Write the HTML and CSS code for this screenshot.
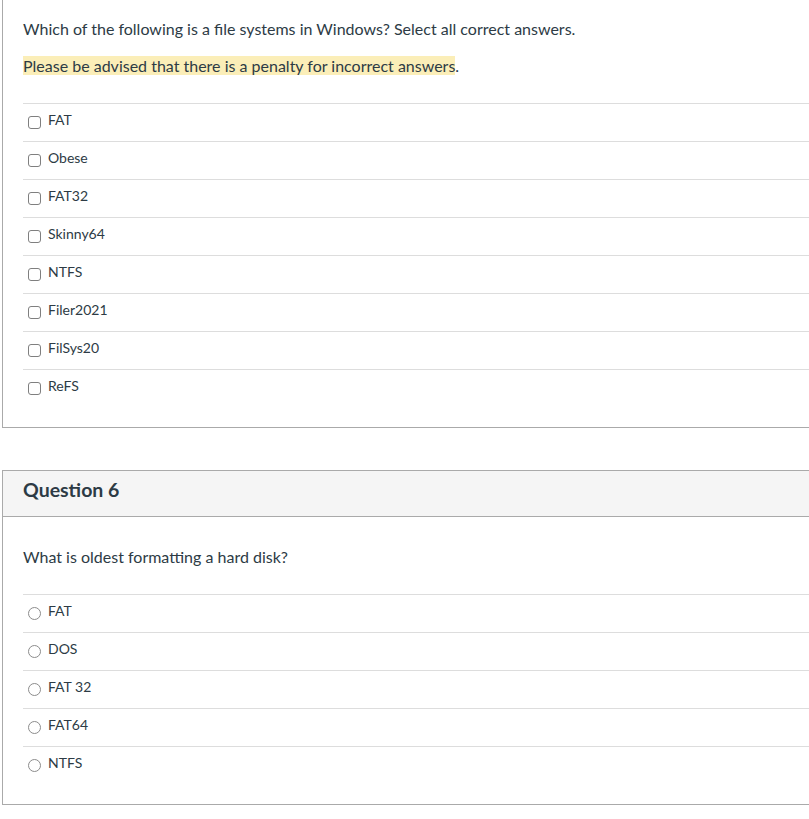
FILE: index.html
```html
<!DOCTYPE html>
<html lang="en">
<head>
<meta charset="utf-8">
<title>Quiz</title>
<link rel="stylesheet" href="styles.css">
</head>
<body>
<div class="page">
  <div class="card card-first">
    <div class="card-body">
      <p class="qtext">Which of the following is a file systems in Windows? Select all correct answers.</p>
      <p class="qtext"><span class="hl">Please be advised that there is a penalty for incorrect answers</span>.</p>
      <div class="answers">
        <label class="answer"><input type="checkbox" class="ctl box"><span>FAT</span></label>
        <label class="answer"><input type="checkbox" class="ctl box"><span>Obese</span></label>
        <label class="answer"><input type="checkbox" class="ctl box"><span>FAT32</span></label>
        <label class="answer"><input type="checkbox" class="ctl box"><span>Skinny64</span></label>
        <label class="answer"><input type="checkbox" class="ctl box"><span>NTFS</span></label>
        <label class="answer"><input type="checkbox" class="ctl box"><span>Filer2021</span></label>
        <label class="answer"><input type="checkbox" class="ctl box"><span>FilSys20</span></label>
        <label class="answer"><input type="checkbox" class="ctl box"><span>ReFS</span></label>
      </div>
    </div>
  </div>

  <div class="card card-second">
    <div class="card-header">
      <h2 class="qtitle">Question 6</h2>
    </div>
    <div class="card-body card-body-q">
      <p class="qtext">What is oldest formatting a hard disk?</p>
      <div class="answers">
        <label class="answer"><input type="radio" name="q6" class="ctl circle"><span>FAT</span></label>
        <label class="answer"><input type="radio" name="q6" class="ctl circle"><span>DOS</span></label>
        <label class="answer"><input type="radio" name="q6" class="ctl circle"><span>FAT 32</span></label>
        <label class="answer"><input type="radio" name="q6" class="ctl circle"><span>FAT64</span></label>
        <label class="answer"><input type="radio" name="q6" class="ctl circle"><span>NTFS</span></label>
      </div>
    </div>
  </div>
</div>
</body>
</html>
```

FILE: styles.css
```css
html, body {
  margin: 0;
  padding: 0;
  background: #ffffff;
  overflow: hidden;
}

body {
  font-family: Lato, "Open Sans", "Liberation Sans", sans-serif;
  color: #2d3b45;
}

.page {
  margin-left: 2px;
  width: 807px;
}

.card {
  border: 1px solid #aaaaaa;
  border-right: none;
  background: #ffffff;
}

.card-first {
  margin-top: -1px;
}

.card-second {
  margin-top: 42px;
}

.card-header {
  background: #f5f5f5;
  border-bottom: 1px solid #aaaaaa;
  padding: 7px 20px 14px;
}

.qtitle {
  margin: 0;
  font-size: 19.5px;
  line-height: 24px;
  font-weight: 700;
  color: #2d3b45;
}

.card-body {
  padding: 17px 0 20px 20px;
}

.card-body-q {
  padding-top: 28px;
}

.qtext {
  margin: 0 0 13px;
  font-size: 16px;
  line-height: 24px;
}

.qtext:last-of-type {
  margin-bottom: 0;
}

.hl {
  background: #fbeeb8;
}

.answers {
  margin-top: 25px;
}

.answer {
  display: flex;
  align-items: flex-start;
  gap: 7px;
  border-top: 1px solid #dddddd;
  padding: 6px 0 11px 5px;
  font-size: 14px;
  line-height: 20px;
}

.ctl {
  -webkit-appearance: none;
  appearance: none;
  margin: 6px 0 0 0;
  width: 13px;
  height: 13px;
  box-sizing: border-box;
  border: 1px solid #7f7f7f;
  background: #ffffff;
  flex: none;
}

.box {
  border-radius: 3px;
}

.circle {
  border-radius: 50%;
  border-color: #8c8c8c;
}
```
